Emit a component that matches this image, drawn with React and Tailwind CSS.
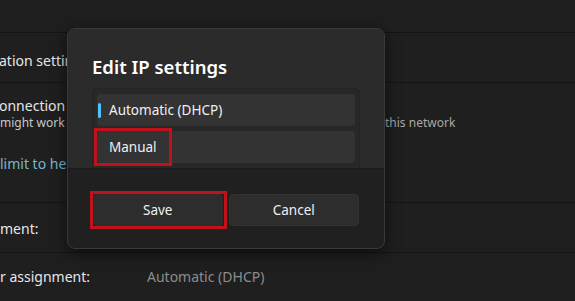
import React from 'react'

const font = { fontFamily: '"Noto Sans", "Open Sans", Arial, sans-serif' }

const Row = ({ className = '', children }) => (
  <div className={`border-b border-[#151515] ${className}`}>{children}</div>
)

const App = () => {
  return (
    <div className="relative w-[575px] h-[301px] overflow-hidden bg-[#1f1f1f] text-[#e6e6e6]" style={font}>
      {/* settings page behind the dialog */}
      <div className="flex flex-col">
        <Row className="h-[33px]" />
        <Row className="h-[50px] flex items-center">
          <span className="text-[14px] -ml-[1px] pt-[5px]">ation setting</span>
        </Row>
        <Row className="h-[120px] pt-[14px]">
          <div className="text-[14px] leading-[18px] -ml-[1px]">onnection</div>
          <div className="flex text-[12px] leading-[16px] text-[#c8c8c8]">
            <span className="w-[385px]">might work c</span>
            <span className="text-[#a8a8a8]">this network</span>
          </div>
          <div className="mt-[22px] text-[14px] text-[#76b9c9]">limit to hel</div>
        </Row>
        <Row className="h-[50px] flex items-center">
          <span className="text-[14px] pt-[2px]">ment:</span>
        </Row>
        <div className="h-[48px] flex items-center pb-[2px]">
          <span className="w-[147px] text-[14px]">r assignment:</span>
          <span className="text-[14px] text-[#8c8c8c]">Automatic (DHCP)</span>
        </div>
      </div>

      {/* Edit IP settings dialog */}
      <div className="absolute left-[67px] top-[28px] w-[318px] h-[221px] rounded-[8px] border border-[#3a3a3a] bg-[#202020] overflow-hidden shadow-[0_4px_16px_rgba(0,0,0,0.6)] flex flex-col">
        <div className="bg-[#2b2b2b] h-[140px] px-[24px] pt-[26px] border-b border-[#1c1c1c] overflow-hidden">
          <h2 className="text-[18.5px] leading-[24px] font-semibold text-white">Edit IP settings</h2>
          <div className="mt-[9px] rounded-t-[6px] bg-[#282828] border border-[#242424] border-b-0 px-[4px] pt-[5px] flex flex-col gap-[5px] h-[90px]">
            <div className="relative h-[32px] rounded-[4px] bg-[#333333] flex items-center pl-[12px] text-[13.5px] text-[#f0f0f0]">
              <span className="absolute left-[1px] top-[9px] w-[3px] h-[15px] rounded-full bg-[#4cc2ff]" />
              Automatic (DHCP)
            </div>
            <div className="relative h-[32px] rounded-[4px] bg-[#333333] flex items-center pl-[12px] text-[13.5px] text-[#f0f0f0]">
              <span className="absolute -left-[3px] -top-[3px] w-[78px] h-[38px] border-[3px] border-[#c0121a]" />
              Manual
            </div>
          </div>
        </div>
        <div className="flex gap-[6px] px-[25px] pt-[25px]">
          <div className="relative w-[131px]">
            <span className="absolute -left-[3px] -top-[3px] w-[137px] h-[38px] border-[3px] border-[#c0121a]" />
            <button className="w-full h-[32px] rounded-[4px] bg-[#2d2d2d] text-[13.5px] text-[#f0f0f0]">Save</button>
          </div>
          <button className="w-[132px] h-[32px] rounded-[4px] bg-[#2d2d2d] border border-[#333] text-[13.5px] text-[#f0f0f0]">Cancel</button>
        </div>
      </div>
    </div>
  )
}

export default App
